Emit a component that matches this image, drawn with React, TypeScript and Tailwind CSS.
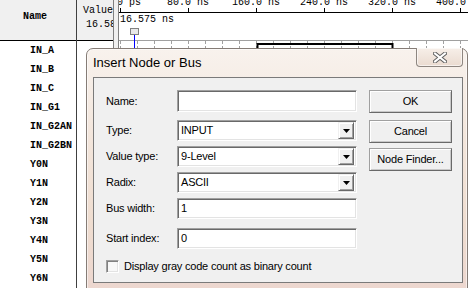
import React from "react";

const names = ["IN_A", "IN_B", "IN_C", "IN_G1", "IN_G2AN", "IN_G2BN", "Y0N", "Y1N", "Y2N", "Y3N", "Y4N", "Y5N", "Y6N"];

const sunken =
  "bg-white border border-t-[#a0a0a0] border-l-[#a0a0a0] border-r-white border-b-white shadow-[inset_1px_1px_0_#696969,inset_-1px_-1px_0_#e3e3e3]";

function TextField({ value, h }: { value: string; h: string }) {
  return (
    <div className={`flex w-[180px] items-center pl-[3px] ${h} ${sunken}`}>
      <span>{value}</span>
    </div>
  );
}

function Select({ value }: { value: string }) {
  return (
    <div className={`flex h-[21px] w-[180px] items-center ${sunken}`}>
      <span className="flex-1 pl-[3px]">{value}</span>
      <div className="mr-[2px] flex h-[17px] w-[16px] items-center justify-center border border-t-[#f0f0f0] border-l-[#f0f0f0] border-r-[#696969] border-b-[#696969] bg-[#f0f0f0] shadow-[inset_1px_1px_0_#ffffff,inset_-1px_-1px_0_#a0a0a0]">
        <svg width="7" height="4" viewBox="0 0 7 4">
          <path d="M0 0 H7 L3.5 4 Z" fill="#000" />
        </svg>
      </div>
    </div>
  );
}

function Row({ label, children, mt }: { label: string; children: React.ReactNode; mt: string }) {
  return (
    <div className={`flex items-center ${mt}`}>
      <div className="w-[71px] shrink-0">{label}</div>
      {children}
    </div>
  );
}

function Button({ label, mt }: { label: string; mt: string }) {
  return (
    <div
      className={`flex h-[23px] w-[83px] items-center justify-center border border-[#a0a0a0] border-r-[#696969] border-b-[#696969] bg-[#f0f0f0] shadow-[inset_1px_1px_0_#ffffff,inset_-1px_-1px_0_#c8c8c8] ${mt}`}
    >
      {label}
    </div>
  );
}

export default function App() {
  const grid: number[] = [];
  for (let x = 1; x < 349; x += 17) grid.push(x);
  const ticks = [1, 69, 137, 205, 273, 341];
  const labels: [string, number][] = [
    ["0 ps", -2],
    ["80.0 ns", 48],
    ["160.0 ns", 113],
    ["240.0 ns", 181],
    ["320.0 ns", 249],
    ["400.0 ns", 317],
  ];

  return (
    <div className="relative h-[288px] w-[468px] overflow-hidden bg-white">
      {/* background waveform editor */}
      <div className="flex h-full font-['Liberation_Mono',monospace] text-[10px] leading-[12px] text-black">
        <div className="flex w-[77px] shrink-0 flex-col border-r border-[#404040]">
          <div className="h-[41px] shrink-0 border-b border-black bg-[#f0f0f0] pl-[23px] pt-[11px] font-bold">Name</div>
          {names.map((n) => (
            <div key={n} className="flex h-[19px] shrink-0 items-center pl-[30px] font-bold">
              {n}
            </div>
          ))}
        </div>
        <div className="flex w-[36px] shrink-0 flex-col overflow-hidden">
          <div className="h-[41px] shrink-0 whitespace-nowrap border-b border-black bg-[#f0f0f0] pt-[5px]">
            <div className="pl-[6px]">Value</div>
            <div className="pl-[9px] pt-[2px]">16.58 ns</div>
          </div>
        </div>
        <div className="w-[6px] shrink-0 border-x border-[#808080] bg-[#f0f0f0]" />
        <div className="relative flex-1 overflow-hidden">
          <svg className="absolute left-0 top-0" width="349" height="288">
            <line x1="0" y1="12.5" x2="349" y2="12.5" stroke="#000" />
            {ticks.map((t) => (
              <line key={t} x1={t + 0.5} y1="8" x2={t + 0.5} y2="12" stroke="#000" />
            ))}
            <line x1="0" y1="40.5" x2="349" y2="40.5" stroke="#a0a0a0" />
            {grid.map((g) => (
              <line key={g} x1={g + 0.5} y1="41" x2={g + 0.5} y2="288" stroke="#a0a0a0" strokeDasharray="3 2" />
            ))}
            <path d="M138.5 52 V44 H273.5 V52" fill="none" stroke="#000" strokeWidth="2" />
            <line x1="15.5" y1="35" x2="15.5" y2="288" stroke="#0000ff" />
            <rect x="11.5" y="28.5" width="8" height="6" fill="#e8e8e8" stroke="#808080" />
          </svg>
          {labels.map(([t, x]) => (
            <span key={t} className="absolute top-[-3px] whitespace-nowrap" style={{ left: x }}>
              {t}
            </span>
          ))}
          <span className="absolute left-[1px] top-[14px] whitespace-nowrap">16.575 ns</span>
        </div>
      </div>

      {/* dialog */}
      <div className="absolute left-[86px] top-[48px] flex h-[250px] w-[382px] flex-col rounded-t-[7px] border border-[#857c76] bg-[linear-gradient(180deg,#f8f2ed_0%,#f3e6dc_35%,#efddd0_70%,#ecd6cf_100%)] font-['Liberation_Sans',Arial,sans-serif] shadow-[inset_0_0_0_1px_rgba(255,255,255,0.55)]">
        <div className="relative flex h-[28px] shrink-0 items-center pl-[6px] text-[13px] text-black">
          <span>Insert Node or Bus</span>
          <div className="absolute right-[4px] top-[-1px] flex h-[19px] w-[47px] items-center justify-center rounded-b-[4px] border border-t-0 border-[#8e8680] bg-[linear-gradient(180deg,#f7efe9,#eadbd0)] shadow-[inset_0_0_0_1px_rgba(255,255,255,0.6)]">
            <svg width="14" height="11" viewBox="0 0 14 11">
              <path d="M2 1.5 L12 9.5 M12 1.5 L2 9.5" stroke="#5f5f5f" strokeWidth="4" strokeLinecap="square" />
              <path d="M2 1.5 L12 9.5 M12 1.5 L2 9.5" stroke="#ffffff" strokeWidth="2" strokeLinecap="square" />
            </svg>
          </div>
        </div>
        <div className="ml-[6px] mr-[4px] flex h-[206px] shrink-0 border border-[#7a7a7a] bg-[#f0f0f0] text-[11px] leading-[13px] tracking-[-0.2px] text-black">
          <div className="flex flex-col pl-[12px]">
            <Row label="Name:" mt="mt-[12px]">
              <TextField value="" h="h-[22px]" />
            </Row>
            <Row label="Type:" mt="mt-[8px]">
              <Select value="INPUT" />
            </Row>
            <Row label="Value type:" mt="mt-[5px]">
              <Select value="9-Level" />
            </Row>
            <Row label="Radix:" mt="mt-[5px]">
              <Select value="ASCII" />
            </Row>
            <Row label="Bus width:" mt="mt-[5px]">
              <TextField value="1" h="h-[21px]" />
            </Row>
            <Row label="Start index:" mt="mt-[9px]">
              <TextField value="0" h="h-[21px]" />
            </Row>
            <div className="mt-[11px] flex items-center">
              <div className="h-[13px] w-[13px] border border-t-[#a0a0a0] border-l-[#a0a0a0] border-r-white border-b-white bg-[#f8f8f8] shadow-[inset_1px_1px_0_#808080,inset_-1px_-1px_0_#e3e3e3]" />
              <span className="ml-[5px]">Display gray code count as binary count</span>
            </div>
          </div>
          <div className="ml-[12px] flex flex-col">
            <Button label="OK" mt="mt-[12px]" />
            <Button label="Cancel" mt="mt-[7px]" />
            <Button label="Node Finder..." mt="mt-[5px]" />
          </div>
        </div>
      </div>
    </div>
  );
}
